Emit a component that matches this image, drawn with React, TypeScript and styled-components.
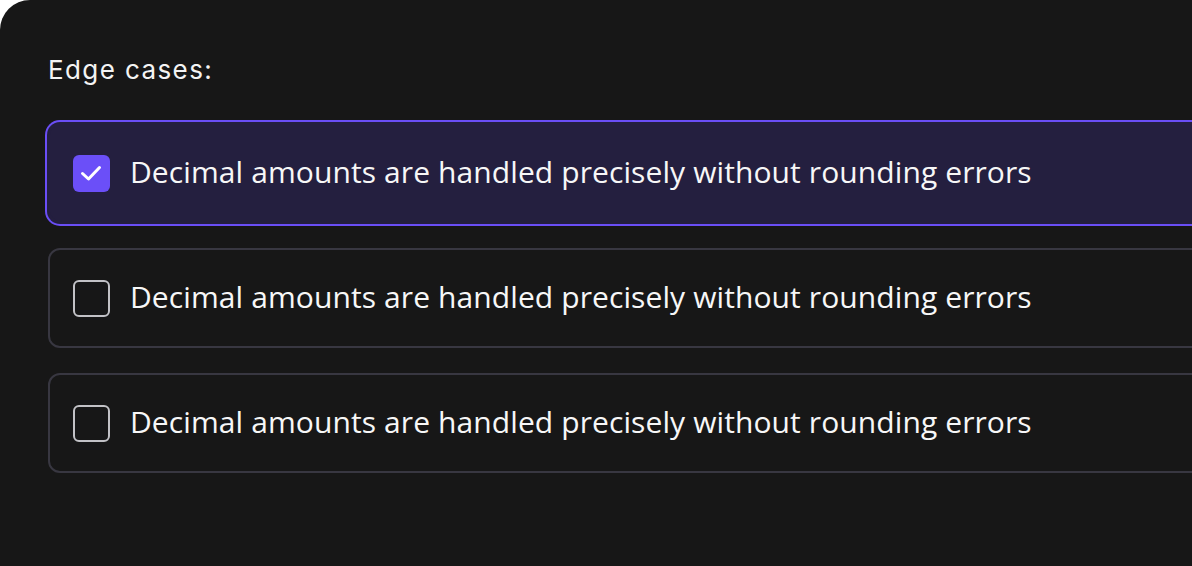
import React, { useState } from "react";
import styled, { createGlobalStyle } from "styled-components";

const GlobalStyle = createGlobalStyle`
  html, body {
    margin: 0;
    padding: 0;
    background: #ffffff;
    overflow: hidden;
  }
  * { box-sizing: border-box; }
`;

const Card = styled.div`
  width: 1400px;
  min-height: 100vh;
  background: #171717;
  border-top-left-radius: 30px;
  padding: 55px 48px 48px 48px;
  display: flex;
  flex-direction: column;
`;

const Heading = styled.h2`
  margin: 0;
  font-family: Inter, "Liberation Sans", sans-serif;
  font-size: 26px;
  line-height: 29px;
  letter-spacing: 1.4px;
  font-weight: 400;
  color: #f4f4f4;
`;

const List = styled.div`
  margin-top: 39px;
  display: flex;
  flex-direction: column;
  gap: 25px;
`;

const Row = styled.label<{ $checked: boolean }>`
  height: 100px;
  display: flex;
  align-items: center;
  gap: 20px;
  padding-left: 23px;
  border-radius: 12px;
  cursor: pointer;
  border: 2px solid ${(p) => (p.$checked ? "#241f3f" : "#383741")};
  background: ${(p) => (p.$checked ? "#241f3f" : "transparent")};
  box-shadow: ${(p) =>
    p.$checked ? "0 0 0 1px #241f3f, 0 0 0 3px #6a4ef6" : "none"};
`;

const Box = styled.span<{ $checked: boolean }>`
  flex: none;
  width: 37px;
  height: 37px;
  border-radius: 6px;
  display: flex;
  align-items: center;
  justify-content: center;
  background: ${(p) => (p.$checked ? "#6b4ff8" : "transparent")};
  border: ${(p) => (p.$checked ? "none" : "2px solid #c2c2c6")};
`;

const Label = styled.span`
  font-family: "Open Sans", "Noto Sans", sans-serif;
  font-size: 30px;
  letter-spacing: 0.1px;
  font-weight: 400;
  color: #f7f7f7;
  white-space: nowrap;
  margin-bottom: 3px;
`;

const CheckIcon = () => (
  <svg width="37" height="37" viewBox="0 0 37 37" fill="none">
    <path
      d="M9.5 18.5 L15.5 24 L26.5 12.5"
      stroke="#ffffff"
      strokeWidth="3"
      strokeLinecap="round"
      strokeLinejoin="round"
    />
  </svg>
);

const items = [
  "Decimal amounts are handled precisely without rounding errors",
  "Decimal amounts are handled precisely without rounding errors",
  "Decimal amounts are handled precisely without rounding errors",
];

export default function App() {
  const [checked, setChecked] = useState<boolean[]>([true, false, false]);
  const toggle = (i: number) =>
    setChecked((c) => c.map((v, j) => (j === i ? !v : v)));
  return (
    <>
      <GlobalStyle />
      <Card>
        <Heading>Edge cases:</Heading>
        <List>
          {items.map((t, i) => (
            <Row key={i} $checked={checked[i]} onClick={() => toggle(i)}>
              <Box $checked={checked[i]}>{checked[i] && <CheckIcon />}</Box>
              <Label>{t}</Label>
            </Row>
          ))}
        </List>
      </Card>
    </>
  );
}
